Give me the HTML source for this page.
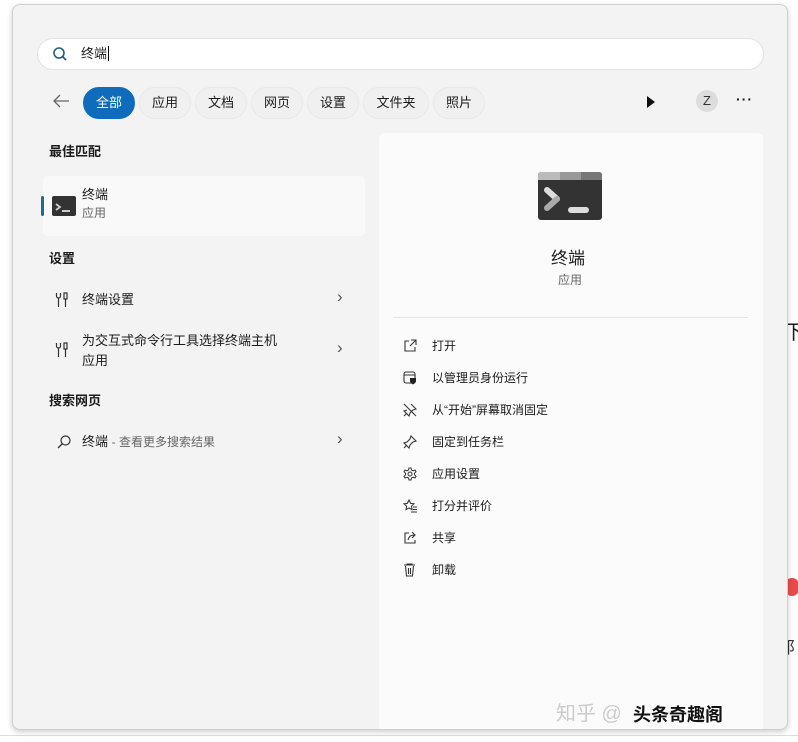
<!DOCTYPE html>
<html><head><meta charset="utf-8"><style>
*{margin:0;padding:0;box-sizing:border-box}
body{width:798px;height:742px;background:#fff;position:relative;overflow:hidden;font-family:"Liberation Sans","Noto Sans CJK SC",sans-serif;color:#1b1b1b;font-size:13px}
.win{position:absolute;left:12px;top:4px;width:776px;height:726px;background:#f3f3f3;border:1px solid #cfcfcf;border-radius:8px;box-shadow:0 2px 6px rgba(0,0,0,.2);overflow:hidden}
.abs{position:absolute}
.search{left:24px;top:33px;width:727px;height:32px;background:#fff;border:1px solid #e3e3e3;border-radius:16px}
.chip{position:absolute;top:82px;height:32px;border-radius:16px;background:#f0f0f0;border:1px solid #e8e8e8;font-size:13px;line-height:30px;text-align:center}
.card{left:366px;top:128px;width:384px;height:600px;background:#fbfbfb;border-radius:6px}
.h{font-weight:bold;font-size:13px}
.mi{position:absolute;left:54px;font-size:12px}
.chev{position:absolute;left:324px;color:#555;font-size:17px}
.ai{position:absolute;left:390px}
.at{position:absolute;left:419px;font-size:12px}
</style></head><body>
<div class="abs" style="left:784px;top:316px;font-size:20px">下</div>
<div class="abs" style="left:785px;top:578px;width:14px;height:18px;background:#e94b4b;border-radius:8px"></div>
<div class="abs" style="left:786px;top:634px;font-size:16px;color:#333">阝</div>
<div class="abs" style="left:0;top:735px;width:798px;height:1px;background:#ddd"></div>
<div class="win">
 <div class="abs search">
  <svg class="abs" style="left:14px;top:7px" width="16" height="16" viewBox="0 0 16 16"><circle cx="7" cy="7" r="5" fill="none" stroke="#1f5f7a" stroke-width="1.6"/><path d="M10.5 10.5L14 14" stroke="#1f5f7a" stroke-width="1.8"/></svg>
  <div class="abs" style="left:43px;top:4px;font-size:13px">终端<span style="border-left:1px solid #000;margin-left:1px"></span></div>
 </div>
 <svg class="abs" style="left:38px;top:88px" width="20" height="16" viewBox="0 0 20 16"><path d="M18 8H3M9 2L3 8l6 6" fill="none" stroke="#666" stroke-width="1.3"/></svg>
 <div class="chip" style="left:70px;width:52px;background:#0f6cbd;border-color:#0f6cbd;color:#fff">全部</div>
 <div class="chip" style="left:126px;width:52px">应用</div>
 <div class="chip" style="left:182px;width:52px">文档</div>
 <div class="chip" style="left:238px;width:52px">网页</div>
 <div class="chip" style="left:294px;width:52px">设置</div>
 <div class="chip" style="left:350px;width:66px">文件夹</div>
 <div class="chip" style="left:420px;width:52px">照片</div>
 <svg class="abs" style="left:632px;top:90px" width="12" height="14"><path d="M2 1L10 7 2 13Z" fill="#111"/></svg>
 <div class="abs" style="left:683px;top:85px;width:22px;height:22px;border-radius:11px;background:#ddd;text-align:center;line-height:22px;font-size:13px;color:#333">Z</div>
 <div class="abs" style="left:723px;top:86px;font-size:14px;font-weight:bold;letter-spacing:1px">···</div>

 <div class="abs h" style="left:36px;top:136px">最佳匹配</div>
 <div class="abs" style="left:30px;top:171px;width:322px;height:60px;background:#f9f9f9;border-radius:5px"></div>
 <div class="abs" style="left:28px;top:191px;width:3px;height:20px;background:#1f6d8f;border-radius:2px"></div>
 <div class="abs" style="left:39px;top:191px;width:24px;height:20px;background:#333;border-radius:2px"><svg width="24" height="20"><path d="M4 8l4 3-4 3" fill="none" stroke="#ccc" stroke-width="1.8"/><path d="M10 15h8" stroke="#ddd" stroke-width="1.8"/></svg></div>
 <div class="abs" style="left:69px;top:179px;font-size:13px">终端</div>
 <div class="abs" style="left:69px;top:199px;font-size:12px;color:#666">应用</div>

 <div class="abs h" style="left:36px;top:243px">设置</div>
 <svg class="abs" style="left:42px;top:287px" width="14" height="16" viewBox="0 0 14 16"><path d="M1.5 1v3a2 2 0 0 0 4 0V1M3.5 6v9M9 1h3v6h-3zM10.5 7v8" fill="none" stroke="#333" stroke-width="1.2"/></svg>
 <div class="mi" style="left:69px;top:284px;font-size:13px">终端设置</div>
 <div class="chev" style="top:282px">›</div>
 <svg class="abs" style="left:42px;top:337px" width="14" height="16" viewBox="0 0 14 16"><path d="M1.5 1v3a2 2 0 0 0 4 0V1M3.5 6v9M9 1h3v6h-3zM10.5 7v8" fill="none" stroke="#333" stroke-width="1.2"/></svg>
 <div class="mi" style="left:69px;top:326px;font-size:13px;line-height:20px">为交互式命令行工具选择终端主机<br>应用</div>
 <div class="chev" style="top:333px">›</div>
 <div class="abs h" style="left:36px;top:385px">搜索网页</div>
 <svg class="abs" style="left:43px;top:429px" width="16" height="16" viewBox="0 0 16 16"><circle cx="9.5" cy="6.5" r="4.5" fill="none" stroke="#333" stroke-width="1.2"/><path d="M6 10L2 14" stroke="#333" stroke-width="1.3"/></svg>
 <div class="mi" style="left:69px;top:426px;font-size:13px">终端 <span style="font-size:12px;color:#666">- 查看更多搜索结果</span></div>
 <div class="chev" style="top:424px">›</div>

 <div class="abs card"></div>
 <div class="abs" style="left:525px;top:167px;width:64px;height:48px;background:#333;border-radius:3px;overflow:hidden">
  <div style="height:8px;background:linear-gradient(90deg,#bbb 0 34%,#999 34% 67%,#777 67%)"></div>
  <svg width="64" height="40"><path d="M9 10l10 9" stroke="#ddd" stroke-width="6" stroke-linecap="round"/><path d="M19 19l-10 9" stroke="#aaa" stroke-width="6" stroke-linecap="round"/><rect x="30" y="27" width="21" height="6" rx="3" fill="#ddd"/></svg>
 </div>
 <div class="abs" style="left:538px;top:239px;font-size:17px">终端</div>
 <div class="abs" style="left:545px;top:266px;font-size:12px;color:#666">应用</div>
 <div class="abs" style="left:380px;top:312px;width:355px;height:1px;background:#e5e5e5"></div>

 <svg class="ai" style="top:334px" width="14" height="14" viewBox="0 0 14 14"><path d="M6 2H2v10h10V8M8 1h5v5M13 1L7 7" fill="none" stroke="#333" stroke-width="1.1"/></svg><div class="at" style="top:332px">打开</div>
 <svg class="ai" style="top:366px" width="14" height="14" viewBox="0 0 14 14"><rect x="1" y="1" width="11" height="11" rx="2" fill="none" stroke="#333" stroke-width="1.1"/><path d="M1 4h11" stroke="#333"/><path d="M7 7h6v3c0 2-3 3.5-3 3.5S7 12 7 10z" fill="#222"/></svg><div class="at" style="top:364px">以管理员身份运行</div>
 <svg class="ai" style="top:398px" width="14" height="14" viewBox="0 0 14 14"><path d="M1 1l12 12M8 1l5 5-3 1-3 3-1 3-5-5 3-1M1 13l3-3" fill="none" stroke="#333" stroke-width="1.1"/></svg><div class="at" style="top:396px">从“开始”屏幕取消固定</div>
 <svg class="ai" style="top:430px" width="14" height="14" viewBox="0 0 14 14"><path d="M8 1l5 5-3 1-3 3-1 3-5-5 3-1 3-3zM1 13l3-3" fill="none" stroke="#333" stroke-width="1.1"/></svg><div class="at" style="top:428px">固定到任务栏</div>
 <svg class="ai" style="top:462px" width="14" height="14" viewBox="0 0 14 14"><circle cx="7" cy="7" r="2" fill="none" stroke="#333"/><path d="M6 1h2l.5 2 1.5.8 2-.8 1 1.7-1.5 1.5v1.6l1.5 1.5-1 1.7-2-.8-1.5.8L8 13H6l-.5-2-1.5-.8-2 .8-1-1.7 1.5-1.5V6.2L1 4.7l1-1.7 2 .8L5.5 3z" fill="none" stroke="#333" stroke-width="1"/></svg><div class="at" style="top:460px">应用设置</div>
 <svg class="ai" style="top:494px" width="15" height="14" viewBox="0 0 15 14"><path d="M6 1l1.6 3.4 3.4.4-2.5 2.4.6 3.5L6 9 3 10.7l.6-3.5L1 4.8l3.4-.4z" fill="none" stroke="#333" stroke-width="1"/><path d="M10 8h4M10 10.5h4M8 13h6" stroke="#333"/></svg><div class="at" style="top:492px">打分并评价</div>
 <svg class="ai" style="top:526px" width="14" height="14" viewBox="0 0 14 14"><path d="M6 2H2v10h10V9M5 9c1-4 3-5 7-5M9 1l3 3-3 3" fill="none" stroke="#333" stroke-width="1.1"/></svg><div class="at" style="top:524px">共享</div>
 <svg class="ai" style="top:558px" width="13" height="14"><path d="M1 2h11M4 2V1h5v1M2.5 3l1 10h6l1-10M5.5 5v6M7.5 5v6" fill="none" stroke="#333" stroke-width="1.1"/></svg><div class="at" style="top:556px">卸载</div>

 <div class="abs" style="left:543px;top:692px;font-size:20px;color:#ccc">知乎 @</div>
 <div class="abs" style="left:620px;top:696px;font-size:18px;font-weight:bold;color:#111;text-shadow:1px 1px 0 #fff">头条奇趣阁</div>
</div>
</body></html>
